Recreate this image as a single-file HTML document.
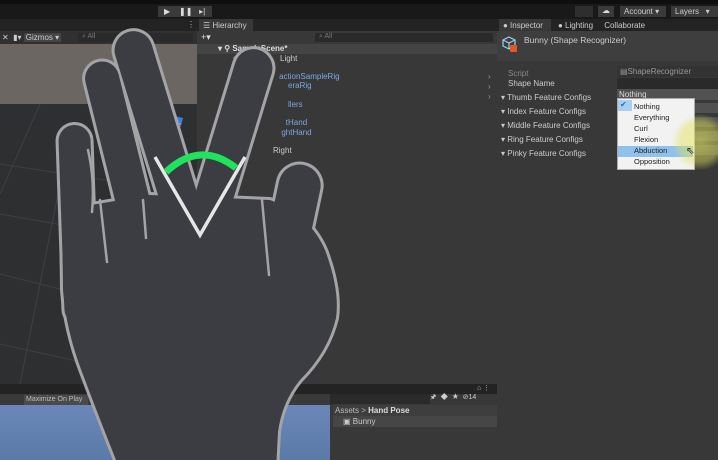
<!DOCTYPE html>
<html><head><meta charset="utf-8"><style>
*{margin:0;padding:0;box-sizing:border-box}
body{width:718px;height:460px;overflow:hidden;background:#282828;font-family:"Liberation Sans",sans-serif;font-size:8px;color:#c8c8c8;position:relative}
.a{position:absolute}
</style></head><body>
<!-- top toolbar -->
<div class="a" style="left:0;top:0;width:718px;height:4px;background:#0e0e0e"></div>
<div class="a" style="left:0;top:4px;width:718px;height:15px;background:#191919"></div>
<div class="a" style="left:158px;top:6px;width:54px;height:11px;background:#3a3a3a"></div>
<div class="a" style="left:164px;top:7px;color:#ddd;font-size:8px">▶&nbsp;&nbsp;&nbsp;&nbsp;❚❚&nbsp;&nbsp;&nbsp;▸|</div>
<div class="a" style="left:575px;top:6px;width:18px;height:11px;background:#2e2e2e"></div>
<div class="a" style="left:598px;top:6px;width:16px;height:11px;background:#3a3a3a;color:#ddd;text-align:center">☁</div>
<div class="a" style="left:620px;top:6px;width:46px;height:11px;background:#3a3a3a;padding:1px 4px;color:#ccc">Account ▾</div>
<div class="a" style="left:671px;top:6px;width:47px;height:11px;background:#3a3a3a;padding:1px 4px;color:#ccc">Layers&nbsp;&nbsp;&nbsp;▾</div>
<!-- scene panel -->
<div class="a" style="left:0;top:19px;width:197px;height:12px;background:#232323"></div>
<div class="a" style="left:187px;top:20px;color:#bbb">⋮</div>
<div class="a" style="left:0;top:31px;width:197px;height:13px;background:#303030"></div>
<div class="a" style="left:2px;top:33px;color:#ccc">✕&nbsp;&nbsp;▮▾ <span style="background:#444;padding:0 2px">Gizmos ▾</span></div>
<div class="a" style="left:78px;top:33px;width:115px;height:9px;background:#2a2a2a;color:#777;padding-left:4px;font-size:7px">⌕ All</div>
<div class="a" style="left:0;top:44px;width:197px;height:60px;background:#6b6661"></div>
<div class="a" style="left:0;top:104px;width:197px;height:282px;background:#2e2f31"></div>
<svg class="a" style="left:0;top:44px" width="197" height="342">
<g stroke="#3f4043" stroke-width="1" fill="none">
<path d="M0 120 L197 150 M0 170 L197 205 M0 230 L120 260 M40 60 L0 150 M70 90 L20 340 M0 300 L90 320"/>
</g>
<g transform="translate(167,70)">
<path d="M0 0 L-5 -14 L5 -14Z" fill="#7fc32d"/>
<path d="M0 0 L16 4 L14 12Z" fill="#3a7ee0"/>
<path d="M0 0 L-10 6 L-6 14Z" fill="#c03030"/>
<circle r="4" fill="#ddd"/>
</g>
<text x="158" y="62" fill="#ccc" font-size="6">y</text>
<text x="178" y="83" fill="#ccc" font-size="6">z</text>
<text x="160" y="106" fill="#bbb" font-size="7">ersp</text>
</svg>
<!-- hierarchy -->
<div class="a" style="left:197px;top:19px;width:300px;height:12px;background:#232323"></div>
<div class="a" style="left:199px;top:19px;width:54px;height:12px;background:#383838;padding:2px 4px;color:#ccc">☰ Hierarchy</div>
<div class="a" style="left:197px;top:31px;width:300px;height:13px;background:#383838"></div>
<div class="a" style="left:201px;top:32px;color:#ddd;font-size:9px">+▾</div>
<div class="a" style="left:315px;top:33px;width:178px;height:9px;background:#2a2a2a;color:#777;padding-left:4px;font-size:7px">⌕ All</div>
<div class="a" style="left:197px;top:44px;width:300px;height:340px;background:#383838"></div>
<div class="a" style="left:197px;top:44px;width:300px;height:10px;background:#444"></div>
<div class="a" style="left:218px;top:44px;color:#ddd;font-weight:bold">▾ ⚲ SampleScene*</div>
<div class="a" style="left:233px;top:54px;color:#ccc">◎&nbsp;&nbsp;&nbsp;&nbsp;&nbsp;&nbsp;&nbsp;&nbsp;&nbsp;&nbsp;&nbsp;&nbsp;&nbsp;&nbsp;&nbsp;&nbsp;&nbsp;&nbsp;Light</div>
<div class="a" style="left:228px;top:72px;color:#7aa7e6;line-height:9.3px">▾ ●&nbsp;&nbsp;&nbsp;&nbsp;&nbsp;&nbsp;&nbsp;&nbsp;&nbsp;&nbsp;&nbsp;&nbsp;&nbsp;&nbsp;&nbsp;&nbsp;&nbsp;&nbsp;actionSampleRig<br>&nbsp;&nbsp;&nbsp;&nbsp;&nbsp;&nbsp;&nbsp;&nbsp;&nbsp;&nbsp;&nbsp;&nbsp;&nbsp;&nbsp;&nbsp;&nbsp;&nbsp;&nbsp;&nbsp;&nbsp;&nbsp;&nbsp;&nbsp;&nbsp;&nbsp;&nbsp;&nbsp;eraRig<br><br>&nbsp;&nbsp;&nbsp;&nbsp;&nbsp;&nbsp;&nbsp;&nbsp;&nbsp;&nbsp;&nbsp;&nbsp;&nbsp;&nbsp;&nbsp;&nbsp;&nbsp;&nbsp;&nbsp;&nbsp;&nbsp;&nbsp;&nbsp;&nbsp;&nbsp;&nbsp;&nbsp;llers<br><br>&nbsp;&nbsp;&nbsp;&nbsp;&nbsp;&nbsp;&nbsp;&nbsp;&nbsp;&nbsp;&nbsp;&nbsp;&nbsp;&nbsp;&nbsp;&nbsp;&nbsp;&nbsp;&nbsp;&nbsp;&nbsp;&nbsp;&nbsp;&nbsp;&nbsp;&nbsp;tHand<br>&nbsp;&nbsp;&nbsp;&nbsp;&nbsp;&nbsp;&nbsp;&nbsp;&nbsp;&nbsp;&nbsp;&nbsp;&nbsp;&nbsp;&nbsp;&nbsp;&nbsp;&nbsp;&nbsp;&nbsp;&nbsp;&nbsp;&nbsp;&nbsp;ghtHand</div>
<div class="a" style="left:273px;top:146px;color:#ccc">Right</div>
<div class="a" style="left:488px;top:72px;color:#999;line-height:10px">›<br>›<br>›</div>
<!-- inspector -->
<div class="a" style="left:497px;top:19px;width:221px;height:12px;background:#232323"></div>
<div class="a" style="left:499px;top:19px;width:52px;height:12px;background:#383838;padding:2px 4px;color:#ccc">● Inspector</div>
<div class="a" style="left:558px;top:21px;color:#ccc">● Lighting&nbsp;&nbsp;&nbsp;&nbsp;&nbsp;Collaborate</div>
<div class="a" style="left:497px;top:31px;width:221px;height:429px;background:#383838"></div>
<div class="a" style="left:497px;top:31px;width:221px;height:30px;background:#3e3e3e"></div>
<svg class="a" style="left:501px;top:35px" width="18" height="18"><path d="M2 5 L8 2 L14 5 L14 11 L8 14 L2 11Z M2 5 L8 8 L14 5 M8 8 L8 14" stroke="#9fd0ef" fill="none" stroke-width="1.2"/><rect x="9" y="10" width="7" height="7" rx="1" fill="#e2572a"/></svg>
<div class="a" style="left:524px;top:35px;color:#ccc;font-size:8.5px">Bunny (Shape Recognizer)</div>
<div class="a" style="left:508px;top:67px;color:#888;line-height:14px">Script</div>
<div class="a" style="left:617px;top:66px;width:101px;height:11px;background:#333;color:#999;padding:1px 3px">▤ShapeRecognizer</div>
<div class="a" style="left:508px;top:79px;color:#ccc">Shape Name</div>
<div class="a" style="left:617px;top:78px;width:101px;height:11px;background:#2a2a2a"></div>
<div class="a" style="left:501px;top:91px;color:#ccc;line-height:14px">▾ Thumb Feature Configs<br>▾ Index Feature Configs<br>▾ Middle Feature Configs<br>▾ Ring Feature Configs<br>▾ Pinky Feature Configs</div>
<div class="a" style="left:617px;top:89px;width:101px;height:11px;background:#515151;color:#ddd;padding:1px 2px">Nothing</div>
<div class="a" style="left:695px;top:103px;width:23px;height:10px;background:#515151"></div>
<div class="a" style="left:695px;top:117px;width:23px;height:10px;background:#515151"></div>
<div class="a" style="left:695px;top:131px;width:23px;height:10px;background:#515151"></div>
<div class="a" style="left:695px;top:145px;width:23px;height:10px;background:#515151"></div>
<div class="a" style="left:617px;top:98px;width:78px;height:72px;background:#f2f2f2;border:1px solid #aaa"></div>
<div class="a" style="left:618px;top:100px;width:14px;height:11px;background:#a8cff2;color:#1c6ad0;font-size:8px;padding-left:2px">✔</div>
<div class="a" style="left:618px;top:146px;width:75px;height:11px;background:#8fc1ec"></div>
<div class="a" style="left:634px;top:101px;color:#222;line-height:11px;font-size:7.5px">Nothing<br>Everything<br>Curl<br>Flexion<br>Abduction<br>Opposition</div>
<div class="a" style="left:672px;top:114px;width:56px;height:56px;border-radius:50%;background:radial-gradient(circle,rgba(235,235,100,.6) 0%,rgba(225,225,90,.45) 50%,rgba(225,225,90,0) 72%)"></div>
<div class="a" style="left:686px;top:146px;color:#222;font-size:10px">⇖</div>
<!-- bottom -->
<div class="a" style="left:0;top:384px;width:497px;height:10px;background:#232323"></div>
<div class="a" style="left:0;top:394px;width:330px;height:11px;background:#3a3a3a"></div>
<div class="a" style="left:24px;top:395px;width:64px;height:10px;background:#4a4a4a;color:#bbb;padding:1px 2px;font-size:7px">Maximize On Play</div>
<div class="a" style="left:0;top:405px;width:330px;height:55px;background:linear-gradient(#6a87b8,#5b7aa8)"></div>
<div class="a" style="left:330px;top:394px;width:167px;height:66px;background:#383838"></div>
<div class="a" style="left:330px;top:394px;width:100px;height:10px;background:#2a2a2a"></div>
<div class="a" style="left:430px;top:393px;color:#ccc;font-size:7px">🖈&nbsp;&nbsp;◆&nbsp;&nbsp;★&nbsp;&nbsp;⊘14</div>
<div class="a" style="left:477px;top:384px;color:#bbb;font-size:7px">⌂ ⋮</div>
<div class="a" style="left:333px;top:405px;width:164px;height:11px;background:#3e3e3e;color:#bbb;padding:1px 2px">Assets &gt; <b style="color:#ddd">Hand Pose</b></div>
<div class="a" style="left:333px;top:416px;width:164px;height:11px;background:#464646;color:#ccc;padding:1px 10px">▣ Bunny</div>
<!-- hand -->
<svg class="a" style="left:0;top:0" width="718" height="460">
<defs>
<g id="h">
<path d="M62 210 L150 195 L270 200 Q310 215 325 250 Q340 290 336 318 Q328 352 300 380 Q282 402 278 432 L276 470 L120 470 Q100 420 82 372 Q66 330 63 290 Z"/>
<rect x="58" y="125" width="32" height="200" rx="16" transform="rotate(-2 74 125)"/>
<rect x="81" y="62" width="34" height="200" rx="17" transform="rotate(-14 98 62)"/>
<rect x="109" y="32" width="38" height="220" rx="19" transform="rotate(-17 128 32)"/>
<rect x="240" y="50" width="38" height="200" rx="19" transform="rotate(17 259 50)"/>
<rect x="283" y="165" width="42" height="130" rx="21" transform="rotate(12 304 165)"/>
</g>
</defs>
<use href="#h" fill="#a4a4a6" stroke="#a4a4a6" stroke-width="6" stroke-linejoin="round"/>
<use href="#h" fill="#3c3d42"/>
<g stroke="#a4a4a6" stroke-width="2.5" fill="none" stroke-linecap="round">
<path d="M100 200 L107 262"/><path d="M143 200 L146 238"/><path d="M262 200 L269 275"/>
<path d="M92 212 Q95 180 88 150"/>
</g>
<path d="M155 157 L200 235 L245 157" stroke="#e6e6e6" stroke-width="3.5" fill="none" stroke-linejoin="miter"/>
<path d="M166 172 Q200 140 236 168" stroke="#1fe35c" stroke-width="7" fill="none"/>
</svg>
</body></html>
